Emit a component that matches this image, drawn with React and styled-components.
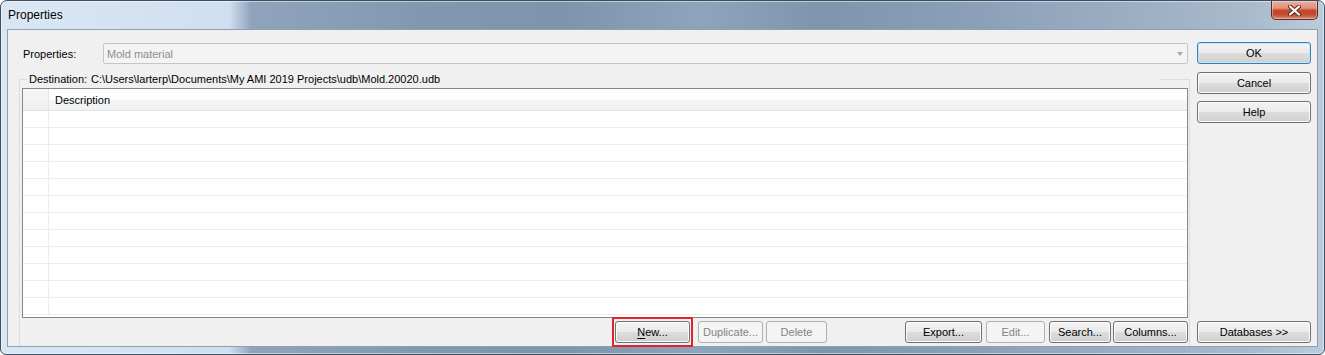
import React from 'react';
import styled, { createGlobalStyle, css } from 'styled-components';

const GlobalStyle = createGlobalStyle`
  html, body { margin: 0; padding: 0; background: #ffffff; }
  body {
    width: 1325px; height: 355px; overflow: hidden;
    font-family: "Liberation Sans", Arial, sans-serif;
    font-size: 11px; color: #000;
  }
  * { box-sizing: border-box; }
`;

const Window = styled.div`
  width: 1325px;
  height: 355px;
  display: flex;
  flex-direction: column;
  border: 1px solid #3d4c5e;
  border-radius: 7px 7px 6px 6px;
  padding: 0 6px 7px 6px;
  overflow: hidden;
  background: linear-gradient(
    to right,
    #d9e6f4 0px,
    #d0dff0 228px,
    #8fa4bc 250px,
    #8298b1 420px,
    #7e94ad 560px,
    #8ea4bd 700px,
    #7f95ae 820px,
    #899eb7 960px,
    #9eb0c4 1150px,
    #a9bacc 1250px,
    #bdccdc 1325px
  );
  box-shadow: inset 0 0 0 1px rgba(255, 255, 255, 0.5);
`;

const TitleBar = styled.div`
  height: 28px;
  flex: none;
  display: flex;
  justify-content: space-between;
  align-items: flex-start;
`;

const Title = styled.div`
  font-size: 12px;
  line-height: 16px;
  margin: 6px 0 0 1px;
  color: #000;
  text-shadow: 0 0 6px rgba(255, 255, 255, 0.7);
`;

const CloseButton = styled.div`
  width: 47px;
  height: 19px;
  display: flex;
  align-items: center;
  justify-content: center;
  border: 1px solid #5a2b22;
  border-top: none;
  border-radius: 0 0 5px 5px;
  background: linear-gradient(
    #eab0a2 0%,
    #de907d 40%,
    #c6452b 52%,
    #c24a31 75%,
    #d98c73 100%
  );
  box-shadow: inset 0 0 0 1px rgba(255, 255, 255, 0.35);
`;

const Client = styled.div`
  flex: 1;
  display: flex;
  gap: 7px;
  padding: 0 6px 0 11px;
  background: #f0f0f0;
  border: 1px solid #8e9fb3;
  min-height: 0;
`;

const LeftCol = styled.div`
  flex: 1;
  min-width: 0;
  display: flex;
  flex-direction: column;
`;

const RightCol = styled.div`
  width: 114px;
  flex: none;
  display: flex;
  flex-direction: column;
  padding: 12px 0 3px 0;
`;

const PropRow = styled.div`
  height: 21px;
  margin-top: 13px;
  display: flex;
  align-items: center;
`;

const Label = styled.span`
  width: 80px;
  margin-left: 4px;
  flex: none;
  white-space: nowrap;
`;

const Combo = styled.div`
  width: 1085px;
  height: 21px;
  display: flex;
  align-items: center;
  justify-content: space-between;
  padding: 0 4px 0 3px;
  border: 1px solid #c3c6c8;
  border-radius: 2px;
  background: #f4f4f4;
  color: #8d8d8d;
`;

const Arrow = styled.span`
  width: 0;
  height: 0;
  border-left: 3.5px solid transparent;
  border-right: 3.5px solid transparent;
  border-top: 4px solid #a9a9a9;
`;

const Group = styled.fieldset`
  flex: 1;
  margin: 8px 0 0 0;
  padding: 2px 1px 0 2px;
  border: 1px solid #d5dfe5;
  border-bottom: none;
  min-width: 0;
`;

const Legend = styled.legend`
  width: 1133px;
  height: 14px;
  line-height: 14px;
  margin-left: 5px;
  padding: 0 2px;
  display: flex;
  white-space: nowrap;
`;

const LegendLabel = styled.span`
  width: 62px;
  flex: none;
`;

const List = styled.div`
  height: 230px;
  border: 1px solid #828790;
  background: #ffffff;
  overflow: hidden;
`;

const gridRow = css`
  display: grid;
  grid-template-columns: 26px 1fr;
`;

const HeaderRow = styled.div`
  ${gridRow};
  height: 22px;
  border-bottom: 1px solid #e2e3e4;
  background: linear-gradient(#ffffff 0%, #ffffff 48%, #f4f5f5 52%, #f1f2f2 100%);
`;

const HeaderCell = styled.div`
  display: flex;
  align-items: center;
  padding-left: ${(p) => (p.$first ? 0 : 6)}px;
  border-right: ${(p) => (p.$first ? '1px solid #e5e5e5' : 'none')};
  background: ${(p) => (p.$first ? 'linear-gradient(#f7f7f7, #efefef)' : 'transparent')};
`;

const Row = styled.div`
  ${gridRow};
  height: 17px;
  border-bottom: 1px solid #ededed;
`;

const Cell = styled.div`
  border-right: ${(p) => (p.$first ? '1px solid #ececec' : 'none')};
`;

const ButtonRow = styled.div`
  display: flex;
  justify-content: flex-end;
  margin-top: 3px;
  height: 22px;
`;

const Button = styled.button`
  width: ${(p) => p.$w}px;
  height: 22px;
  margin-left: ${(p) => p.$ml || 0}px;
  margin-top: ${(p) => p.$mt || 0}px;
  padding: 0;
  flex: none;
  font-family: "Liberation Sans", Arial, sans-serif;
  font-size: 11px;
  color: #000;
  border: 1px solid #707070;
  border-radius: 3px;
  background: linear-gradient(#f2f2f2 0%, #ebebeb 48%, #dddddd 52%, #cfcfcf 100%);
  box-shadow: inset 0 0 0 1px #fbfbfb;
  cursor: default;

  ${(p) =>
    p.$default &&
    css`
      border-color: #3c7fb1;
      box-shadow: inset 0 0 0 1px #bfe6f8;
    `}

  &:disabled {
    color: #838383;
    border-color: #adb2b5;
    background: #f4f4f4;
    box-shadow: none;
  }

  u { text-decoration: underline; text-underline-offset: 2px; }
`;

const Highlight = styled.span`
  position: relative;
  display: inline-flex;
  margin-left: ${(p) => p.$ml || 0}px;

  &::after {
    content: '';
    position: absolute;
    top: -4px;
    bottom: -4px;
    left: -3px;
    right: -3px;
    border: 2px solid #e1232b;
    pointer-events: none;
  }
`;

const Spacer = styled.div`
  flex: 1;
`;

const CloseIcon = () => (
  <svg width="13" height="11" viewBox="0 0 13 11">
    <path d="M2 1.5 L11 9.5 M11 1.5 L2 9.5" stroke="#5b2418" strokeWidth="4" strokeLinecap="round" />
    <path d="M2 1.5 L11 9.5 M11 1.5 L2 9.5" stroke="#ffffff" strokeWidth="2.2" strokeLinecap="round" />
  </svg>
);

export default function App() {
  const rows = Array.from({ length: 12 });
  return (
    <>
      <GlobalStyle />
      <Window>
        <TitleBar>
          <Title>Properties</Title>
          <CloseButton>
            <CloseIcon />
          </CloseButton>
        </TitleBar>
        <Client>
          <LeftCol>
            <PropRow>
              <Label>Properties:</Label>
              <Combo>
                <span>Mold material</span>
                <Arrow />
              </Combo>
            </PropRow>
            <Group>
              <Legend>
                <LegendLabel>Destination:</LegendLabel>
                <span>C:\Users\larterp\Documents\My AMI 2019 Projects\udb\Mold.20020.udb</span>
              </Legend>
              <List>
                <HeaderRow>
                  <HeaderCell $first />
                  <HeaderCell>Description</HeaderCell>
                </HeaderRow>
                {rows.map((_, i) => (
                  <Row key={i}>
                    <Cell $first />
                    <Cell />
                  </Row>
                ))}
              </List>
              <ButtonRow>
                <Highlight>
                  <Button $w={75}>
                    <u>N</u>ew...
                  </Button>
                </Highlight>
                <Button $w={65} $ml={8} disabled>Duplicate...</Button>
                <Button $w={61} $ml={3} disabled>Delete</Button>
                <Button $w={77} $ml={78}>Export...</Button>
                <Button $w={59} $ml={4} disabled>Edit...</Button>
                <Button $w={62} $ml={4}>Search...</Button>
                <Button $w={75} $ml={2}>Columns...</Button>
              </ButtonRow>
            </Group>
          </LeftCol>
          <RightCol>
            <Button $w={114} $default>OK</Button>
            <Button $w={114} $mt={8}>Cancel</Button>
            <Button $w={114} $mt={7}>Help</Button>
            <Spacer />
            <Button $w={114}>Databases &gt;&gt;</Button>
          </RightCol>
        </Client>
      </Window>
    </>
  );
}
